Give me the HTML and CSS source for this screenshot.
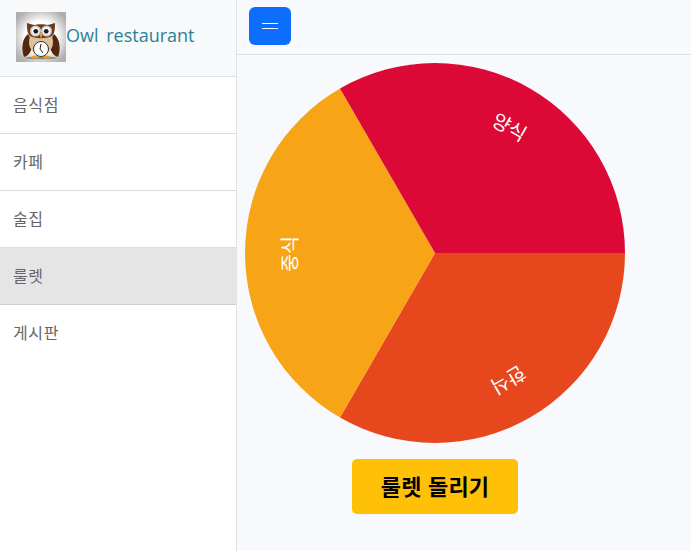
FILE: index.html
```html
<!DOCTYPE html>
<html lang="ko">
<head>
    <meta charset="UTF-8">
    <meta name="viewport" content="width=device-width, initial-scale=1.0">
    <title>Owl restaurant</title>
    <link rel="stylesheet" href="styles.css">
</head>
<body>
    <div class="wrapper">
        <nav class="sidebar">
            <div class="sidebar-heading">
                <svg class="logo" width="50" height="50" viewBox="0 0 50 50">
                    <defs>
                        <radialGradient id="logo-bg" cx="50%" cy="50%" r="70%">
                            <stop offset="0.45" stop-color="#ffffff"/>
                            <stop offset="0.85" stop-color="#b0b0b0"/>
                        </radialGradient>
                    </defs>
                    <rect width="50" height="50" fill="url(#logo-bg)"/>
                    <ellipse cx="25" cy="46" rx="16" ry="1.3" fill="#8a8a8a"/>
                    <!-- wings -->
                    <path d="M12 22 C6 27 5 37 8 45 C13 44 17 37 17 30 Z" fill="#52280f"/>
                    <path d="M38 22 C44 27 45 37 42 45 C37 44 33 37 33 30 Z" fill="#52280f"/>
                    <!-- body -->
                    <ellipse cx="25" cy="30" rx="12" ry="13" fill="#dcc39c"/>
                    <!-- head -->
                    <path d="M11 11 L18 13 C22 12 28 12 32 13 L39 11 C39 16 39 21 36 24 C30 27 20 27 14 24 C11 21 11 16 11 11 Z" fill="#6d3b1c"/>
                    <circle cx="19.5" cy="19" r="5.5" fill="#cfcfcf"/>
                    <circle cx="30.5" cy="19" r="5.5" fill="#cfcfcf"/>
                    <circle cx="19.5" cy="19" r="3.8" fill="#fff"/>
                    <circle cx="30.5" cy="19" r="3.8" fill="#fff"/>
                    <circle cx="19.8" cy="19.3" r="2.4" fill="#1d1d1d"/>
                    <circle cx="30.2" cy="19.3" r="2.4" fill="#1d1d1d"/>
                    <path d="M23 21 L27 21 L25 27 Z" fill="#f29a1c"/>
                    <!-- feet -->
                    <ellipse cx="19" cy="45" rx="3.5" ry="1.6" fill="#f29a1c"/>
                    <ellipse cx="31" cy="45" rx="3.5" ry="1.6" fill="#f29a1c"/>
                    <!-- clock -->
                    <circle cx="25" cy="37" r="7.5" fill="#fff" stroke="#333" stroke-width="1"/>
                    <path d="M25 32 L24 37 L27 41" fill="none" stroke="#222" stroke-width="1"/>
                </svg>
                <span class="brand">Owl restaurant</span>
            </div>
            <a class="menu-item" href="#">음식점</a>
            <a class="menu-item" href="#">카페</a>
            <a class="menu-item" href="#">술집</a>
            <a class="menu-item active" href="#">룰렛</a>
            <a class="menu-item plain" href="#">게시판</a>
        </nav>

        <div class="page">
            <div class="topbar">
                <button class="toggle" type="button" aria-label="메뉴">
                    <span class="toggle-line"></span>
                    <span class="toggle-line"></span>
                </button>
            </div>
            <div class="content">
                <svg class="wheel" width="380" height="380" viewBox="-190 -190 380 380">
                    <path d="M0 0 L190 0 A190 190 0 0 1 -95 164.54 Z" fill="#e6471d"/>
                    <path d="M0 0 L-95 164.54 A190 190 0 0 1 -95 -164.54 Z" fill="#f7a416"/>
                    <path d="M0 0 L-95 -164.54 A190 190 0 0 1 190 0 Z" fill="#dc0936"/>
                    <text class="wheel-label" transform="translate(75 -127) rotate(30)">양식</text>
                    <text class="wheel-label" transform="translate(74 128) rotate(150)">한식</text>
                    <text class="wheel-label" transform="translate(-147 1) rotate(270)">중식</text>
                </svg>
                <button class="spin" type="button">룰렛 돌리기</button>
            </div>
        </div>
    </div>
</body>
</html>
```

FILE: styles.css
```css
body {
    margin: 0;
    height: 551px;
    overflow: hidden;
    font-family: "Noto Sans CJK KR", "Noto Sans", sans-serif;
    background-color: #f8f9fc;
}

.wrapper {
    display: flex;
    height: 100%;
}

.sidebar {
    width: 236px;
    flex-shrink: 0;
    background: #fff;
    border-right: 1px solid #dee2e6;
}

.sidebar-heading {
    display: flex;
    align-items: center;
    height: 77px;
    padding: 0 0 2px 16px;
    box-sizing: border-box;
    background: #f8f9fb;
    border-bottom: 1px solid #dee2e6;
}

.logo {
    flex-shrink: 0;
}

.brand {
    margin-bottom: 4px;
    font-family: "Open Sans", sans-serif;
    font-size: 18px;
    word-spacing: 3px;
    color: #2a8299;
}

.menu-item {
    display: flex;
    align-items: center;
    height: 57px;
    padding: 0 0 2px 13px;
    box-sizing: border-box;
    font-size: 16px;
    letter-spacing: 0.6px;
    color: #666;
    text-decoration: none;
    border-bottom: 1px solid #dcdcdc;
}

.menu-item.active {
    background: #e5e5e5;
    border-bottom-color: #cfcfcf;
}

.menu-item.plain {
    padding-bottom: 4px;
    border-bottom: none;
}

.page {
    flex: 1;
    min-width: 0;
}

.topbar {
    height: 55px;
    padding: 7px 12px 0;
    box-sizing: border-box;
    border-bottom: 1px solid #dee2e6;
}

.toggle {
    display: flex;
    flex-direction: column;
    align-items: center;
    justify-content: center;
    gap: 4px;
    width: 42px;
    height: 38px;
    padding: 0;
    background: #0d6efd;
    border: none;
    border-radius: 6px;
}

.toggle-line {
    width: 16px;
    height: 1px;
    background: #fff;
}

.content {
    display: flex;
    flex-direction: column;
    align-items: center;
    width: 380px;
    padding: 8px 0 0 8px;
}

.wheel-label {
    font-size: 19.5px;
    fill: #fff;
    text-anchor: middle;
    dominant-baseline: central;
}

.spin {
    width: 166px;
    height: 55px;
    margin-top: 16px;
    padding: 0 0 3px;
    font-family: "Noto Sans CJK KR", sans-serif;
    font-size: 22px;
    font-weight: 700;
    letter-spacing: 0.2px;
    color: #000;
    background: #ffc107;
    border: none;
    border-radius: 5px;
}
```
